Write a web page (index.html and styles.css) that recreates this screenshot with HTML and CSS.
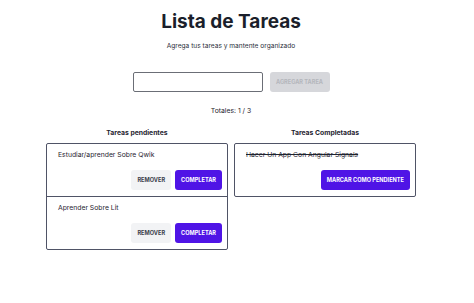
FILE: index.html
```html
<!DOCTYPE html>
<html lang="es">
<head>
  <meta charset="UTF-8" />
  <meta name="viewport" content="width=device-width, initial-scale=1.0"/>
  <title>Lista de Tareas</title>
  <link rel="stylesheet" href="styles.css">
</head>
<body>
  <div class="page">
    <h1>Lista de Tareas</h1>
    <p class="subtitle">Agrega tus tareas y mantente organizado</p>

    <form class="add-form">
      <input type="text" class="task-input">
      <button type="button" class="add-btn" disabled>Agregar tarea</button>
    </form>

    <p class="totals">Totales: 1 / 3</p>

    <div class="columns">
      <div class="column">
        <h3>Tareas pendientes</h3>
        <ul class="task-list">
          <li class="task">
            <span class="task-name">Estudiar/aprender Sobre Qwik</span>
            <div class="actions">
              <button class="btn remove">Remover</button>
              <button class="btn primary">Completar</button>
            </div>
          </li>
          <li class="task">
            <span class="task-name">Aprender Sobre Lit</span>
            <div class="actions">
              <button class="btn remove">Remover</button>
              <button class="btn primary">Completar</button>
            </div>
          </li>
        </ul>
      </div>

      <div class="column">
        <h3>Tareas Completadas</h3>
        <ul class="task-list">
          <li class="task">
            <span class="task-name done">Hacer Un App Con Angular Signals</span>
            <div class="actions">
              <button class="btn primary">Marcar como pendiente</button>
            </div>
          </li>
        </ul>
      </div>
    </div>
  </div>
</body>
</html>
```

FILE: styles.css
```css
body {
  margin: 0;
  font-family: Inter, "Noto Sans", sans-serif;
  color: #1f2430;
  background: #fff;
}

.page {
  width: 462px;
  padding-top: 9px;
}

h1 {
  margin: 0;
  text-align: center;
  font-size: 19px;
  line-height: 26px;
  font-weight: 700;
  color: #1b1f2b;
}

.subtitle {
  margin: 6px 0 0;
  text-align: center;
  font-size: 6.6px;
  line-height: 10px;
  color: #2b2f3a;
}

.add-form {
  display: flex;
  justify-content: center;
  gap: 7px;
  margin-top: 21px;
}

.task-input {
  box-sizing: border-box;
  width: 130px;
  height: 20px;
  margin: 0;
  border: 1px solid #6b6e76;
  border-radius: 2px;
}

.add-btn {
  box-sizing: border-box;
  width: 60px;
  height: 20px;
  padding: 0;
  border: none;
  border-radius: 3px;
  background: #d6d7db;
  color: #b4b6bb;
  font-family: inherit;
  font-size: 5.6px;
  font-weight: 700;
  text-transform: uppercase;
  white-space: nowrap;
}

.totals {
  margin: 14px 0 0;
  text-align: center;
  font-size: 6.8px;
  line-height: 10px;
}

.columns {
  display: flex;
  gap: 6px;
  margin: 12px 0 0 46px;
  width: 370px;
  align-items: flex-start;
}

.column {
  flex: 1;
}

.column h3 {
  margin: 0 0 5px;
  text-align: center;
  font-size: 6.8px;
  line-height: 10px;
  font-weight: 700;
}

.task-list {
  list-style: none;
  margin: 0;
  padding: 0;
  border: 1px solid #4f5366;
  border-radius: 2px;
}

.task {
  padding: 6px 5px 6px 11px;
}

.task + .task {
  border-top: 1px solid #4f5366;
}

.task-name {
  display: block;
  font-size: 6.8px;
  line-height: 10px;
  color: #1f2430;
}

.task-name.done {
  text-decoration: line-through;
}

.actions {
  display: flex;
  justify-content: flex-end;
  gap: 4px;
  margin-top: 10px;
}

.btn {
  height: 20px;
  padding: 0 6px;
  border: none;
  border-radius: 3px;
  font-family: inherit;
  font-size: 5.6px;
  font-weight: 700;
  text-transform: uppercase;
}

.btn.remove {
  background: #f2f3f5;
  color: #3a3e4a;
}

.btn.primary {
  background: #4f14e6;
  color: #fff;
}
```
